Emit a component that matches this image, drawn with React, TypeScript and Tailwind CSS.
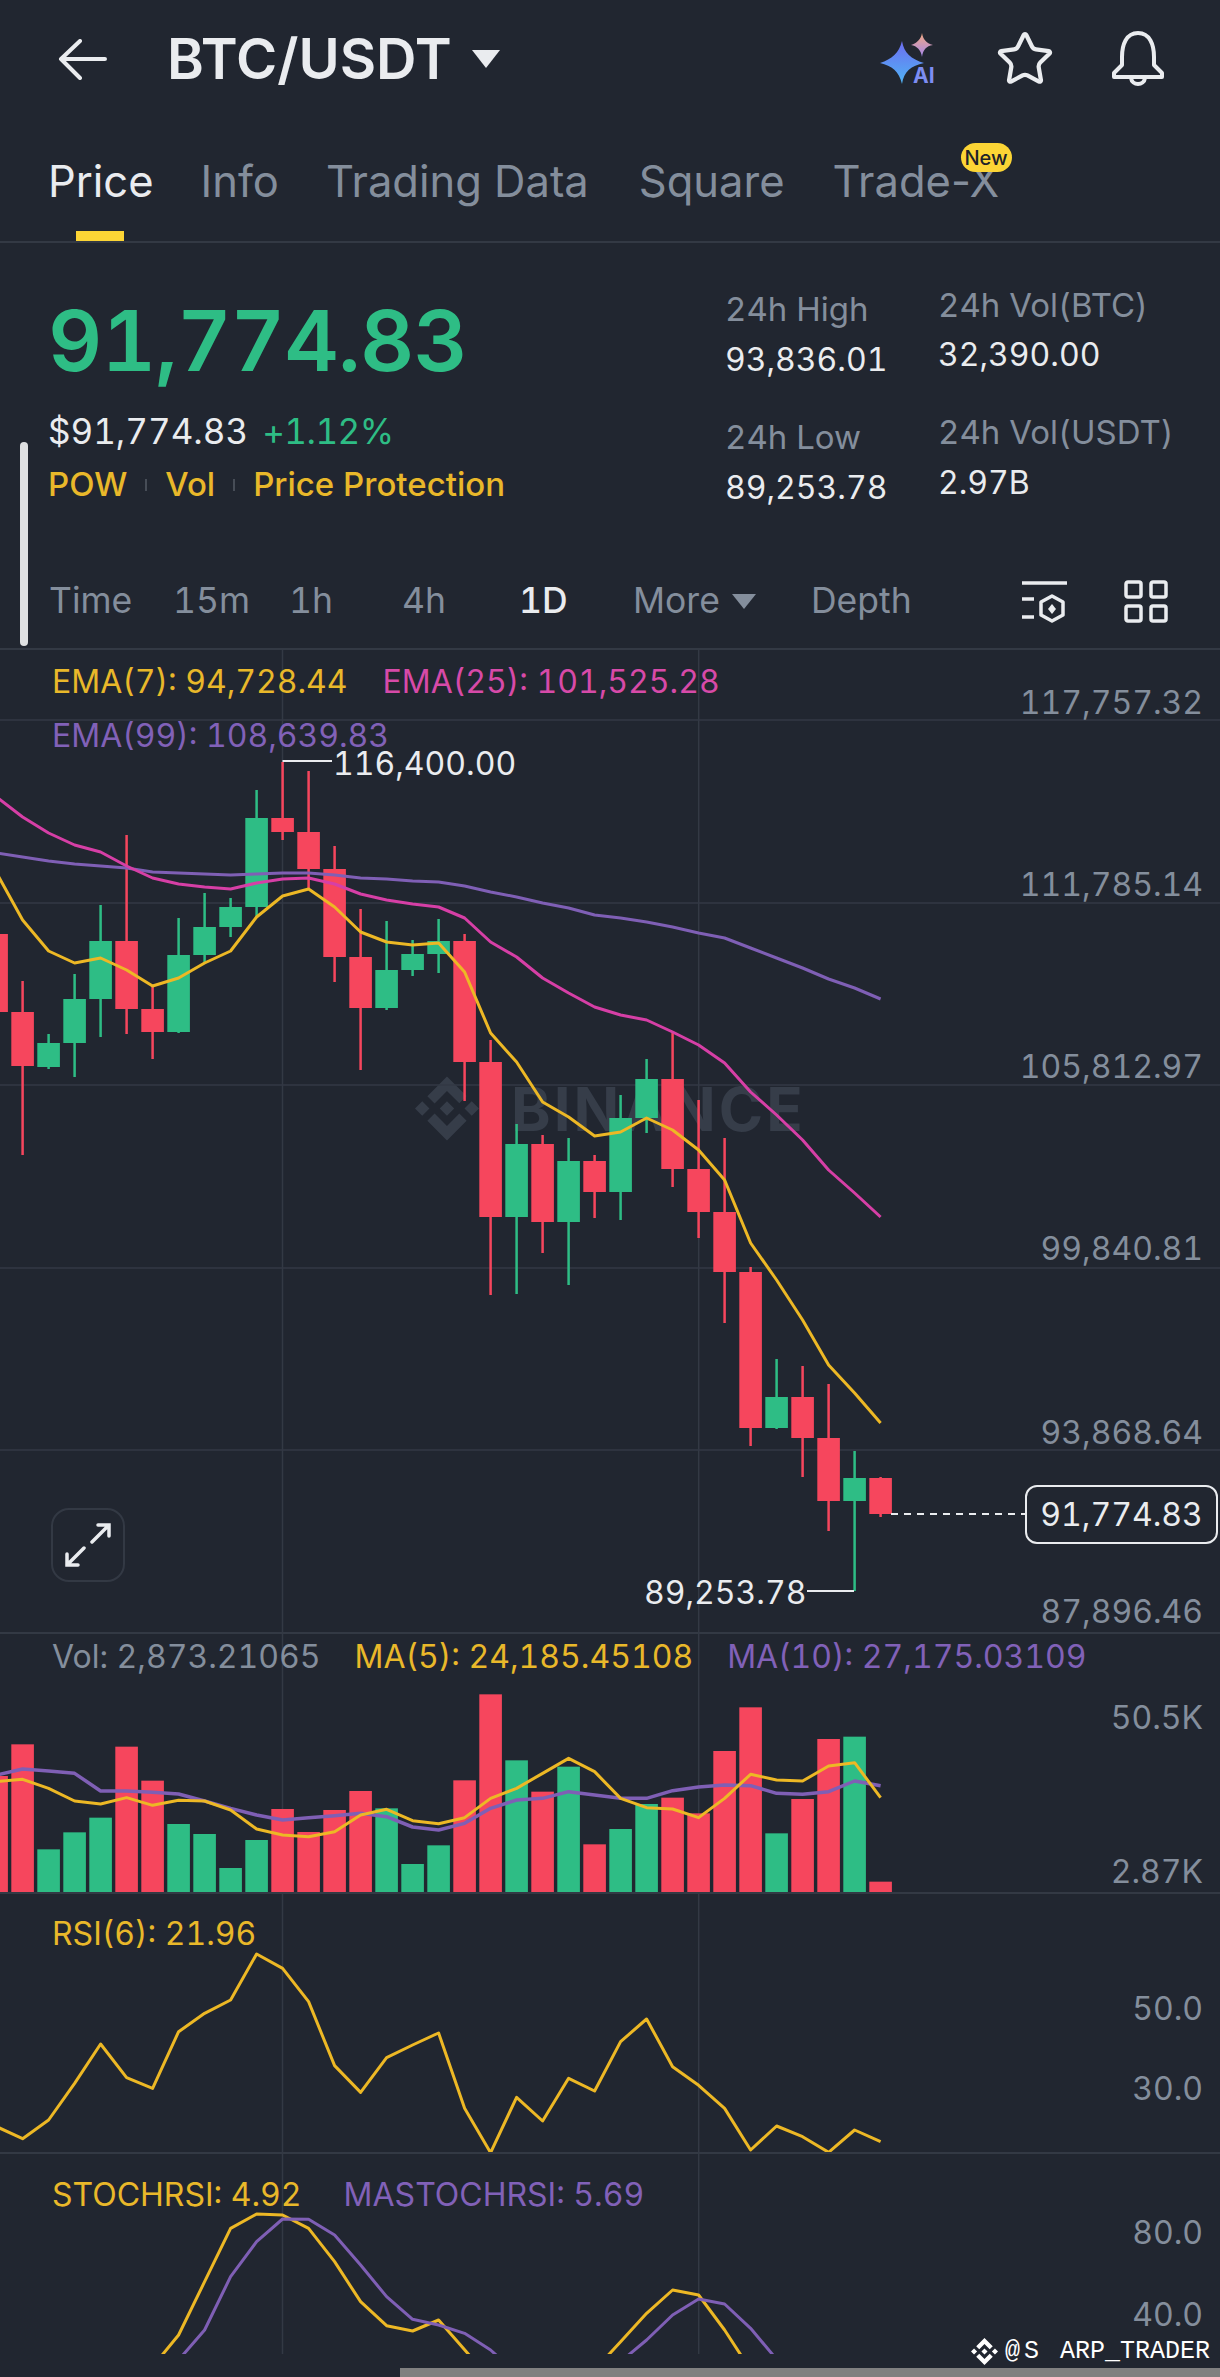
import { Star } from "lucide-react";
import { SiBinance } from "react-icons/si";

/***** CHART DATA (page coordinates, one slot per candle, 26px apart) *****/
const GREEN = "#2ebd85";
const RED = "#f6465d";
const YELLOW = "#edb825";
const MAGENTA = "#d63fa6";
const PURPLE = "#7f5fb5";
const GRID = "#333944";

const slotX = (i: number) => -3.4 + 26 * i;

// [wickTop, wickBottom, bodyTop, bodyBottom, up]
const candles: [number, number, number, number, boolean][] = [
	[900, 1040, 934, 1012, false],
	[981, 1155, 1012, 1066, false],
	[1034, 1069, 1043, 1067, true],
	[974, 1077, 999, 1043, true],
	[905, 1037, 941, 999, true],
	[835, 1034, 941, 1009, false],
	[985, 1059, 1009, 1032, false],
	[918, 1033, 955, 1032, true],
	[893, 963, 927, 955, true],
	[898, 937, 907, 927, true],
	[790, 917, 818, 907, true],
	[762, 840, 818, 832, false],
	[771, 890, 832, 869, false],
	[846, 982, 869, 957, false],
	[909, 1070, 957, 1008, false],
	[921, 1010, 970, 1008, true],
	[940, 976, 954, 970, true],
	[919, 973, 941, 954, true],
	[934, 1101, 941, 1062, false],
	[1040, 1295, 1062, 1217, false],
	[1124, 1294, 1144, 1217, true],
	[1135, 1253, 1144, 1222, false],
	[1138, 1285, 1161, 1222, true],
	[1155, 1218, 1161, 1192, false],
	[1095, 1220, 1118, 1192, true],
	[1059, 1133, 1079, 1118, true],
	[1033, 1187, 1079, 1169, false],
	[1100, 1238, 1169, 1212, false],
	[1138, 1323, 1212, 1272, false],
	[1267, 1446, 1272, 1428, false],
	[1359, 1429, 1397, 1428, true],
	[1366, 1477, 1397, 1438, false],
	[1384, 1531, 1438, 1501, false],
	[1451, 1591, 1478, 1501, true],
	[1477, 1517, 1478, 1514, false],
];

const ema7 = [873, 920, 951, 963, 958, 970, 986, 978, 963, 951, 917, 896, 889, 907, 932, 942, 945, 943, 972, 1033, 1062, 1102, 1117, 1136, 1132, 1118, 1130, 1150, 1180, 1243, 1280, 1320, 1365, 1393, 1423];
const ema25 = [797, 817, 833, 845, 852, 866, 878, 884, 887, 889, 883, 879, 878, 884, 894, 900, 904, 907, 918, 942, 957, 978, 993, 1007, 1015, 1020, 1032, 1045, 1063, 1092, 1115, 1140, 1170, 1193, 1217];
const ema99 = [853, 857, 861, 864, 866, 868, 872, 873, 874, 875, 874, 873, 873, 875, 878, 879, 881, 882, 886, 892, 897, 903, 908, 915, 918, 922, 927, 933, 938, 948, 958, 968, 979, 988, 999];

const volTops = [408, 313, 628, 577, 533, 320, 422, 552, 582, 684, 600, 507, 576, 510, 453, 505, 672, 616, 421, 163, 361, 455, 380, 613, 567, 492, 473, 520, 333, 202, 580, 477, 297, 290, 725].map((v) => 1640 + v / 3);
const volUp = [false, false, true, true, true, false, false, true, true, true, true, false, false, false, false, true, true, true, false, false, true, false, true, false, true, true, false, false, false, false, true, false, false, true, false];
const ma5 = [425, 418, 445, 483, 492, 473, 496, 481, 483, 510, 567, 585, 590, 575, 525, 508, 542, 551, 533, 475, 445, 400, 355, 395, 475, 503, 507, 533, 475, 403, 420, 423, 378, 368, 473].map((v) => 1640 + v / 3);
const ma10 = [405, 387, 393, 400, 453, 453, 457, 462, 483, 505, 525, 540, 533, 527, 520, 530, 561, 570, 550, 505, 480, 475, 455, 465, 475, 475, 452, 441, 435, 437, 460, 463, 455, 423, 437].map((v) => 1640 + v / 3);

const rsi = [680, 716, 660, 550, 432, 533, 565, 395, 340, 300, 162, 205, 305, 497, 577, 473, 435, 399, 625, 758, 592, 663, 535, 573, 425, 357, 500, 556, 625, 750, 678, 710, 757, 690, 725].map((v) => 1900 + v / 3);

const toPage = (v: number) => 1900 + v / 3;
const stochA = [1400, 1305, 1145, 985, 942, 945, 985, 1085, 1205, 1277, 1293, 1260, 1349, 1440].map(toPage);
const stochB = [1410, 1325, 1240, 1170, 1185, 1290, 1410].map(toPage);
const maStochA = [1470, 1380, 1290, 1130, 1025, 957, 958, 1005, 1095, 1190, 1258, 1275, 1300, 1350, 1420].map(toPage);
const maStochB = [1385, 1320, 1245, 1197, 1212, 1285, 1378].map(toPage);

const linePoints = (ys: number[], from = 0) =>
	ys.map((y, i) => `${slotX(i + from)},${y}`).join(" ");

/***** SMALL PARTS *****/
const Curve = ({ ys, color, from = 0, width = 3 }: { ys: number[]; color: string; from?: number; width?: number }) => (
	<polyline points={linePoints(ys, from)} fill="none" stroke={color} strokeWidth={width} strokeLinejoin="round" />
);

const VerticalGrid = ({ top, bottom }: { top: number; bottom: number }) => (
	<>
		<line x1="282.5" x2="282.5" y1={top} y2={bottom} stroke={GRID} strokeWidth="1.5" />
		<line x1="698.7" x2="698.7" y1={top} y2={bottom} stroke={GRID} strokeWidth="1.5" />
	</>
);

const AiIcon = () => (
	<svg width="58" height="52" viewBox="0 0 58 52" className="shrink-0">
		<defs>
			<linearGradient id="aiBig" x1="0" y1="0" x2="0" y2="1">
				<stop offset="0" stopColor="#6d6cf0" />
				<stop offset="1" stopColor="#4fb4f5" />
			</linearGradient>
			<linearGradient id="aiSmall" x1="0" y1="0" x2="0" y2="1">
				<stop offset="0" stopColor="#f2a880" />
				<stop offset="1" stopColor="#a487ee" />
			</linearGradient>
		</defs>
		<path d="M22 8 C24 20 31 26 44 30 C31 33 24 38 22 51 C19 38 12 33 0 30 C12 26 19 20 22 8Z" fill="url(#aiBig)" />
		<path d="M42 0 C43 6 46 10 53 12 C46 13 43 17 42 24 C41 17 37 13 31 12 C37 10 41 6 42 0Z" fill="url(#aiSmall)" />
		<text x="33" y="50" fontSize="21" fontWeight="700" fill="#7d8df2">AI</text>
	</svg>
);

const BellIcon = () => (
	<svg width="54" height="56" viewBox="0 0 54 56" fill="none" stroke="#eaecef" strokeWidth="4" strokeLinejoin="round" className="shrink-0">
		<path d="M27 2 C15 2 11 14 11 26 V34 L3 42 V46 H51 V42 L43 34 V26 C43 14 39 2 27 2Z" />
		<path d="M20 47 C21 55 33 55 34 47" />
	</svg>
);

const ChartSettingsIcon = () => (
	<svg width="45" height="43" viewBox="0 0 45 43" fill="none" stroke="#eaecef" strokeWidth="3.5" className="shrink-0">
		<path d="M0 3 H45 M0 19 H12 M0 37 H12" />
		<path d="M30 16 L41 22 V35 L30 41 L19 35 V22Z" strokeLinejoin="round" />
		<path d="M30 24 L34 29 L30 34 L26 29Z" fill="#eaecef" stroke="none" />
	</svg>
);

const GridIcon = () => (
	<svg width="44" height="43" viewBox="0 0 44 43" fill="none" stroke="#eaecef" strokeWidth="3.5" className="shrink-0">
		<rect x="2" y="2" width="15" height="15" rx="2" />
		<rect x="27" y="2" width="15" height="15" rx="2" />
		<rect x="2" y="26" width="15" height="15" rx="2" />
		<rect x="27" y="26" width="15" height="15" rx="2" />
	</svg>
);

/***** PAGE *****/
export default function App() {
	return (
		<div className="relative w-[1220px] h-[2377px] overflow-hidden bg-[#212630] font-[Inter,sans-serif] tabular-nums text-[#eaecef]">
			{/* header */}
			<header className="flex items-center h-[118px] pl-[58px] pr-[55px]">
				<svg width="49" height="41" viewBox="0 0 49 41" fill="none" stroke="#eaecef" strokeWidth="4" strokeLinecap="round" strokeLinejoin="round" className="shrink-0">
					<path d="M3 20 H47 M22 2 L3 20 L22 39" />
				</svg>
				<h1 className="ml-[60px] text-[56px] font-semibold leading-none whitespace-nowrap">BTC/USDT</h1>
				<div className="ml-[20px] w-0 h-0 border-x-[14px] border-x-transparent border-t-[18px] border-t-[#eaecef]" />
				<div className="ml-auto flex items-center">
					<AiIcon />
					<Star size={60} strokeWidth={1.7} className="ml-[57px] shrink-0" />
					<div className="ml-[56px]">
						<BellIcon />
					</div>
				</div>
			</header>

			{/* tabs */}
			<nav className="relative flex gap-[47px] h-[125px] pl-[48px] pt-[31px] border-b-2 border-[#333944] text-[43.5px] leading-[64px] normal-nums text-[#848e9c] whitespace-nowrap">
				<span className="relative text-[#eaecef]">
					Price
					<span className="absolute left-[28px] top-[82px] w-[48px] h-[10px] bg-[#fcd535]" />
				</span>
				<span>Info</span>
				<span>Trading Data</span>
				<span className="ml-[3px]">Square</span>
				<span className="relative ml-[1px]">
					Trade-X
					<span className="absolute left-[128px] top-[-6px] flex items-center justify-center w-[51px] h-[29px] rounded-full bg-[#fcd535] text-[20px] leading-none font-medium text-[#1e2329]">
						New
					</span>
				</span>
			</nav>

			{/* price + 24h stats */}
			<section className="flex h-[311px] whitespace-nowrap">
				<div className="w-[725px] pl-[48px] pt-[56px]">
					<div className="text-[84px] leading-[84px] font-semibold text-[#2ebd85] tracking-[-0.7px]">91,774.83</div>
					<div className="flex items-center gap-[14px] h-[44px] mt-[26px] text-[35px]">
						<span>$91,774.83</span>
						<span className="text-[#2ebd85] tracking-[-0.5px]">+1.12%</span>
					</div>
					<div className="flex items-center h-[44px] mt-[10px] text-[33px] font-medium text-[#e9b82a]">
						<span>POW</span>
						<span className="mx-[18px] w-[2px] h-[12px] bg-[#474d57]" />
						<span>Vol</span>
						<span className="mx-[18px] w-[2px] h-[12px] bg-[#474d57]" />
						<span>Price Protection</span>
					</div>
				</div>
				<div className="w-[213px] pt-[46px] text-[33px] leading-[40px]">
					<div className="text-[#848e9c]">24h High</div>
					<div className="mt-[11px] text-[32px]">93,836.01</div>
					<div className="mt-[37px] text-[#848e9c]">24h Low</div>
					<div className="mt-[11px] text-[32px]">89,253.78</div>
				</div>
				<div className="pt-[42px] text-[33px] leading-[40px]">
					<div className="text-[#848e9c]">24h Vol(BTC)</div>
					<div className="mt-[10px] text-[32px]">32,390.00</div>
					<div className="mt-[37px] text-[#848e9c]">24h Vol(USDT)</div>
					<div className="mt-[11px] text-[32px]">2.97B</div>
				</div>
			</section>

			{/* timeframes */}
			<div className="flex items-center h-[96px] pl-[49px] border-b-2 border-[#333944] text-[35.5px] text-[#848e9c] whitespace-nowrap">
				<span className="w-[124px]">Time</span>
				<span className="w-[116px]">15m</span>
				<span className="w-[113px]">1h</span>
				<span className="w-[117px]">4h</span>
				<span className="w-[114px] font-medium text-[#eaecef]">1D</span>
				<span className="flex items-center w-[178px]">
					More
					<span className="ml-[12px] w-0 h-0 border-x-[12px] border-x-transparent border-t-[15px] border-t-[#848e9c]" />
				</span>
				<span className="w-[211px]">Depth</span>
				<span className="w-[102px]">
					<ChartSettingsIcon />
				</span>
				<GridIcon />
			</div>

			{/* main chart */}
			<div className="relative h-[984px] border-b-2 border-[#333944] text-[32px] leading-[32px] whitespace-nowrap">
				<div className="absolute left-[415px] top-[420px] flex items-center gap-[32px] text-[#363d49]">
					<SiBinance className="w-[64px] h-[77px]" />
					<span className="text-[60px] leading-none font-bold tracking-[3px]">BINANCE</span>
				</div>
				<svg className="absolute left-0 top-0" width="1220" height="982" viewBox="0 650 1220 982">
					<VerticalGrid top={650} bottom={1632} />
					{[720, 903, 1085, 1268, 1450].map((y) => (
						<line key={y} x1="0" x2="1220" y1={y} y2={y} stroke={GRID} strokeWidth="1.5" />
					))}
					{candles.map(([wickTop, wickBottom, bodyTop, bodyBottom, up], i) => (
						<g key={slotX(i)} fill={up ? GREEN : RED}>
							<rect x={slotX(i) - 1.25} y={wickTop} width="2.5" height={wickBottom - wickTop} />
							<rect x={slotX(i) - 11.3} y={bodyTop} width="22.6" height={bodyBottom - bodyTop} />
						</g>
					))}
					<Curve ys={ema99} color={PURPLE} />
					<Curve ys={ema25} color={MAGENTA} />
					<Curve ys={ema7} color={YELLOW} />
					<path d="M282.5 761 H332" stroke="#eaecef" strokeWidth="2" fill="none" />
					<path d="M807 1591 H854" stroke="#eaecef" strokeWidth="2" fill="none" />
					<path d="M891 1514 H1025" stroke="#eaecef" strokeWidth="2" strokeDasharray="7 6" fill="none" />
				</svg>

				<div className="absolute left-[52px] top-[16px] flex gap-[35px]">
					<span className="text-[#e9b82a]">EMA(7): 94,728.44</span>
					<span className="text-[#d74aa8]">EMA(25): 101,525.28</span>
				</div>
				<span className="absolute left-[52px] top-[70px] text-[#8161b8]">EMA(99): 108,639.83</span>
				<span className="absolute left-[333px] top-[98px]">116,400.00</span>
				<span className="absolute left-[644px] top-[927px]">89,253.78</span>

				<span className="absolute right-[17px] top-[37px] text-[#848e9c]">117,757.32</span>
				<span className="absolute right-[17px] top-[219px] text-[#848e9c]">111,785.14</span>
				<span className="absolute right-[17px] top-[401px] text-[#848e9c]">105,812.97</span>
				<span className="absolute right-[17px] top-[583px] text-[#848e9c]">99,840.81</span>
				<span className="absolute right-[17px] top-[767px] text-[#848e9c]">93,868.64</span>
				<span className="absolute right-[17px] top-[946px] text-[#848e9c]">87,896.46</span>

				<span className="absolute left-[1025px] top-[835px] flex items-center justify-center w-[193px] h-[59px] rounded-[12px] border-2 border-[#eaecef] bg-[#212630]">
					91,774.83
				</span>

				<button className="absolute left-[51px] top-[858px] flex items-center justify-center w-[74px] h-[74px] rounded-[18px] border-2 border-[#333944]">
					<svg width="46" height="44" viewBox="0 0 46 44" fill="none" stroke="#eaecef" strokeWidth="3.5" strokeLinecap="round">
						<path d="M27 19 L44 2 M33 2 H44 V13 M19 25 L2 42 M2 31 V42 H13" />
					</svg>
				</button>
			</div>

			{/* volume */}
			<div className="relative h-[260px] border-b-2 border-[#333944] text-[32px] leading-[32px] whitespace-nowrap">
				<svg className="absolute left-0 top-0" width="1220" height="258" viewBox="0 1634 1220 258">
					<VerticalGrid top={1634} bottom={1892} />
					{volTops.map((top, i) => (
						<rect key={slotX(i)} x={slotX(i) - 11.3} y={top} width="22.6" height={1892 - top} fill={volUp[i] ? GREEN : RED} />
					))}
					<Curve ys={ma10} color={PURPLE} width={3.5} />
					<Curve ys={ma5} color={YELLOW} />
				</svg>
				<div className="absolute left-[52px] top-[7px] flex gap-[34px]">
					<span className="text-[#848e9c]">Vol: 2,873.21065</span>
					<span className="text-[#e9b82a]">MA(5): 24,185.45108</span>
					<span className="text-[#8161b8]">MA(10): 27,175.03109</span>
				</div>
				<span className="absolute right-[17px] top-[68px] text-[#848e9c]">50.5K</span>
				<span className="absolute right-[17px] top-[222px] text-[#848e9c]">2.87K</span>
			</div>

			{/* rsi */}
			<div className="relative h-[260px] border-b-2 border-[#333944] text-[32px] leading-[32px] whitespace-nowrap">
				<svg className="absolute left-0 top-0" width="1220" height="258" viewBox="0 1894 1220 258">
					<VerticalGrid top={1894} bottom={2152} />
					<Curve ys={rsi} color={YELLOW} />
				</svg>
				<span className="absolute left-[52px] top-[24px] text-[#e9b82a]">RSI(6): 21.96</span>
				<span className="absolute right-[17px] top-[99px] text-[#848e9c]">50.0</span>
				<span className="absolute right-[17px] top-[179px] text-[#848e9c]">30.0</span>
			</div>

			{/* stoch rsi */}
			<div className="relative h-[200px] overflow-hidden text-[32px] leading-[32px] whitespace-nowrap">
				<svg className="absolute left-0 top-0" width="1220" height="200" viewBox="0 2154 1220 200">
					<VerticalGrid top={2154} bottom={2354} />
					<Curve ys={stochA} color={YELLOW} from={6} />
					<Curve ys={stochB} color={YELLOW} from={23} />
					<Curve ys={maStochA} color={PURPLE} from={6} />
					<Curve ys={maStochB} color={PURPLE} from={24} />
				</svg>
				<div className="absolute left-[52px] top-[25px] flex gap-[42px]">
					<span className="text-[#e9b82a]">STOCHRSI: 4.92</span>
					<span className="text-[#8161b8]">MASTOCHRSI: 5.69</span>
				</div>
				<span className="absolute right-[17px] top-[63px] text-[#848e9c]">80.0</span>
				<span className="absolute right-[17px] top-[145px] text-[#848e9c]">40.0</span>
			</div>

			{/* bottom bar */}
			<div className="mt-[14px] ml-[400px] h-[9px] bg-[#808080]" />

			{/* overlays */}
			<div className="absolute left-[20px] top-[442px] w-[8px] h-[204px] rounded-full bg-[#dfe0e2]" />
			<div className="absolute left-[971px] top-[2338px] flex items-center gap-[7px] text-[25px] leading-[27px] font-['Liberation_Mono',monospace] text-white whitespace-pre">
				<SiBinance className="w-[27px] h-[27px]" />
				<span className="tracking-[4px]">@S</span>
				<span className="ml-[10px]">ARP_TRADER</span>
			</div>
		</div>
	);
}
